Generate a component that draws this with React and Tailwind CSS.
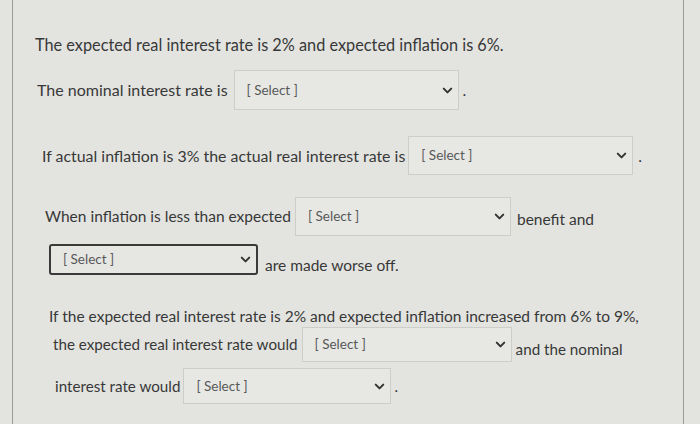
import { ChevronDown } from 'lucide-react';

function Select({ className = '', dark = false }) {
  return (
    <div
      className={`flex items-center justify-between pl-3 pr-[3px] shrink-0 ${
        dark
          ? 'border-2 border-[#3a3a3a] rounded-[3px] bg-[#e6e7e3]'
          : 'border border-[#cdcec9] bg-[#e7e8e4]'
      } ${className}`}
    >
      <span className="text-[13.5px] text-[#585858]">[ Select ]</span>
      <ChevronDown size={15} strokeWidth={3.2} className="text-[#333]" />
    </div>
  );
}

export default function App() {
  return (
    <div
      className="w-[700px] h-[424px] overflow-hidden bg-[#e3e4e0] text-[#383838] text-[16px]"
      style={{ fontFamily: 'Lato, "Open Sans", sans-serif' }}
    >
      <div className="ml-[12px] w-[672px] h-full border-x border-[#9a9b97] pt-[33px]">
        <p className="pl-[22px] leading-[24px] text-[16.3px]">
          The expected real interest rate is 2% and expected inflation is 6%.
        </p>

        <div className="mt-[13px] pl-[24px] flex items-center">
          <span>The nominal interest rate is</span>
          <Select className="ml-[6px] w-[225px] h-[40px]" />
          <span className="ml-[4px]">.</span>
        </div>

        <div className="mt-[26px] pl-[29px] flex items-center text-[15.9px]">
          <span>If actual inflation is 3% the actual real interest rate is</span>
          <Select className="ml-[3px] w-[225px] h-[39px]" />
          <span className="ml-[5px]">.</span>
        </div>

        <div className="mt-[22px] pl-[32px] flex items-center text-[15.5px]">
          <span>When inflation is less than expected</span>
          <Select className="ml-[4px] w-[216px] h-[39px]" />
          <span className="ml-[6px] mt-[6px]">benefit and</span>
        </div>

        <div className="mt-[8px] pl-[36px] flex items-end text-[15.5px]">
          <Select dark className="w-[209px] h-[31px]" />
          <span className="ml-[7px] mb-[-2px]">are made worse off.</span>
        </div>

        <p className="mt-[29px] pl-[36px] leading-[24px] text-[15.5px]">
          If the expected real interest rate is 2% and expected inflation increased from 6% to 9%,
        </p>

        <div className="mt-[-1px] pl-[40px] flex items-center text-[15.2px]">
          <span>the expected real interest rate would</span>
          <Select className="ml-[4px] w-[210px] h-[35px]" />
          <span className="ml-[4px] mt-[10px]">and the nominal</span>
        </div>

        <div className="mt-[6px] pl-[42px] flex items-center text-[15.2px]">
          <span>interest rate would</span>
          <Select className="ml-[3px] w-[208px] h-[36px]" />
          <span className="ml-[3px]">.</span>
        </div>
      </div>
    </div>
  );
}
